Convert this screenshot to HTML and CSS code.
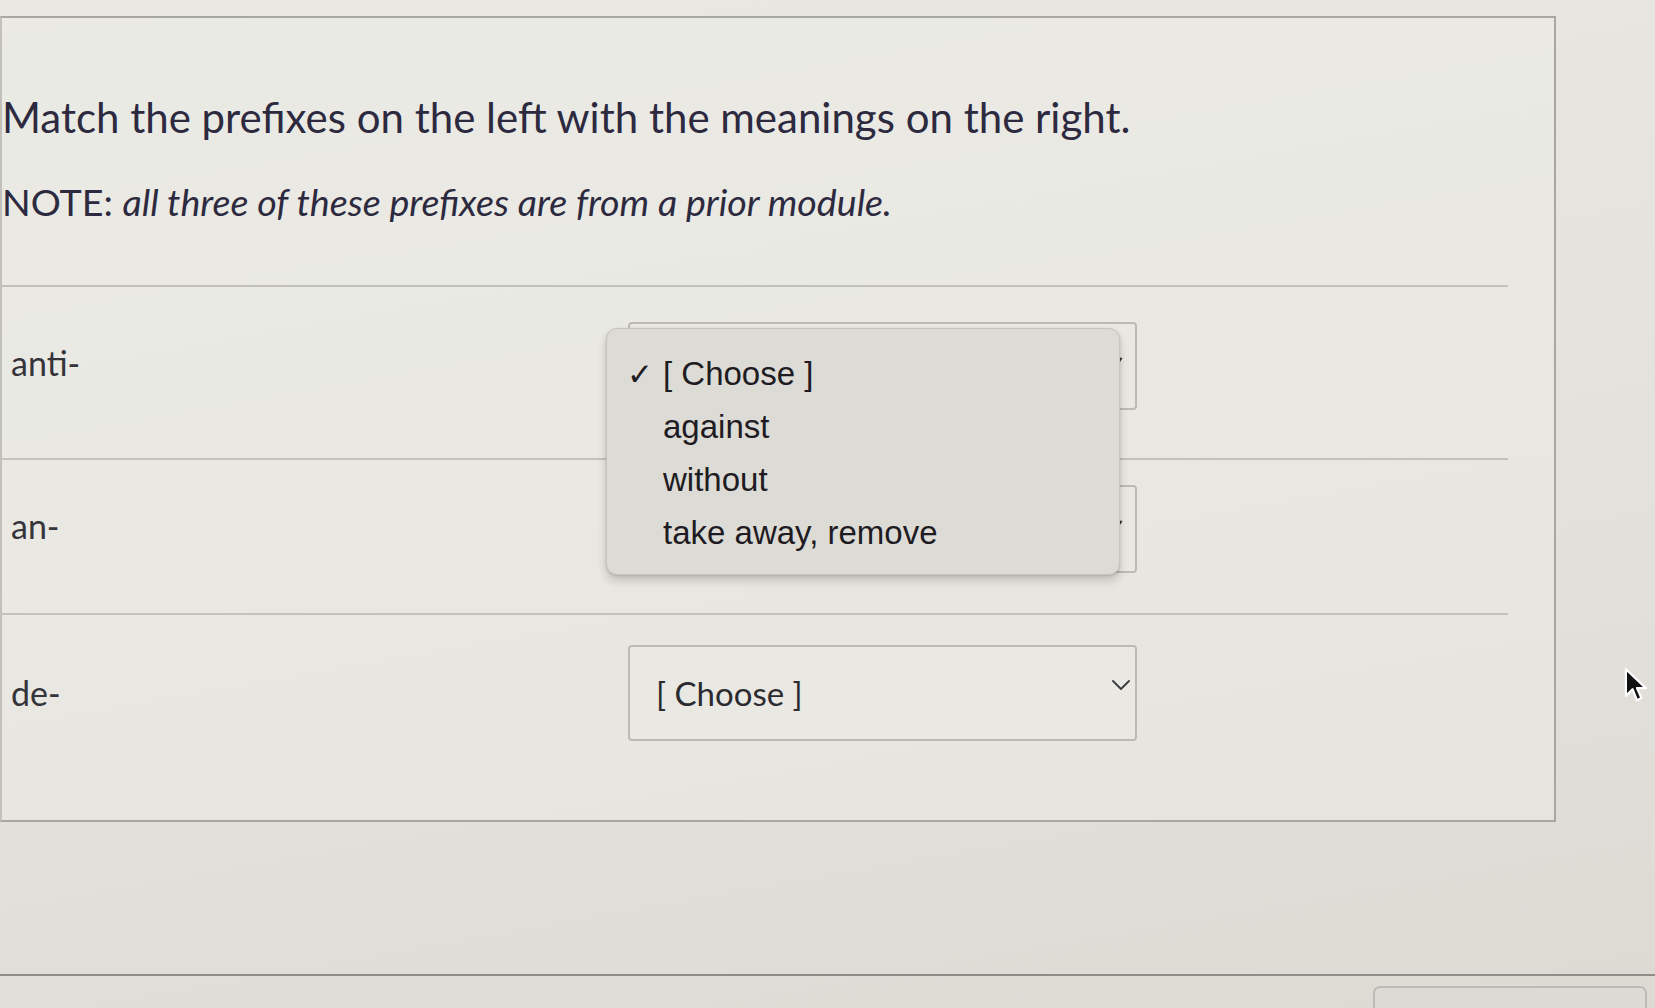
FILE: index.html
```html
<!DOCTYPE html>
<html lang="en">
<head>
<meta charset="utf-8">
<title>Matching question</title>
<link rel="stylesheet" href="styles.css">
</head>
<body>
<div class="screen">
  <div class="card">
    <div class="question">
      <p class="prompt">Match the prefixes on the left with the meanings on the right.</p>
      <p class="note">NOTE: <em>all three of these prefixes are from a prior module.</em></p>
    </div>
    <div class="answers">
      <div class="row row-first">
        <div class="label">anti-</div>
        <div class="select-wrap">
          <div class="select covered"><span class="value">[ Choose ]</span><span class="tick"></span></div>
          <ul class="menu">
            <li class="opt checked"><span class="check">✓</span>[ Choose ]</li>
            <li class="opt"><span class="check"></span>against</li>
            <li class="opt"><span class="check"></span>without</li>
            <li class="opt"><span class="check"></span>take away, remove</li>
          </ul>
        </div>
      </div>
      <div class="row row-second">
        <div class="label">an-</div>
        <div class="select-wrap">
          <div class="select covered"><span class="value">[ Choose ]</span><span class="tick"></span></div>
        </div>
      </div>
      <div class="row row-last">
        <div class="label">de-</div>
        <div class="select-wrap">
          <div class="select"><span class="value">[ Choose ]</span>
            <svg class="chev" width="18" height="10" viewBox="0 0 18 10"><path d="M1 1 L9 9 L17 1" fill="none" stroke="#3a3940" stroke-width="1.8" stroke-linecap="round" stroke-linejoin="round"/></svg>
          </div>
        </div>
      </div>
    </div>
  </div>
  <div class="footer">
    <div class="footer-btn"></div>
  </div>
  <svg class="cursor" width="30" height="40" viewBox="0 0 26 36"><path d="M3 2 L3 26 L9 20 L13 30 L17 28 L13 19 L21 19 Z" fill="#111" stroke="#fff" stroke-width="2" stroke-linejoin="round"/></svg>
</div>
</body>
</html>
```
FILE: styles.css
```css
html, body {
  margin: 0;
  padding: 0;
}
body {
  background: #e2e0da;
  font-family: Lato, "Open Sans", sans-serif;
  color: #2e2c3c;
  width: 1655px;
  height: 1008px;
  overflow: hidden;
}
.screen {
  position: relative;
  width: 1655px;
  height: 1008px;
  padding-top: 16px;
  box-sizing: border-box;
  background: linear-gradient(170deg, #e9e8e3 0%, #e4e2dc 55%, #dcdad3 100%);
}
.card {
  width: 1556px;
  height: 806px;
  box-sizing: border-box;
  border-top: 2px solid #a8a6a0;
  border-right: 2px solid #a8a6a0;
  border-bottom: 2px solid #a8a6a0;
  border-left: 2px solid #c2c0ba;
  background: rgba(238, 237, 232, 0.45);
}
.question {
  margin-right: 46px;
  padding: 72px 0 0 0;
  height: 269px;
  box-sizing: border-box;
  border-bottom: 2px solid #c3c1bb;
}
.prompt {
  margin: 0;
  font-size: 42px;
  line-height: 54px;
  color: #2d2a40;
}
.note {
  margin: 36px 0 0 0;
  font-size: 37.6px;
  line-height: 44px;
  color: #2d2a40;
}
.note em {
  font-style: italic;
}
.answers {
  margin-right: 46px;
}
.row {
  display: grid;
  grid-template-columns: 626px 509px;
  align-items: center;
  border-bottom: 2px solid #c3c1bb;
  padding: 35px 0 48px 0;
}
.row-second {
  padding: 25px 0 40px 0;
}
.row-last {
  border-bottom: none;
  padding: 30px 0 0 0;
}
.label {
  padding-left: 9px;
  font-size: 34px;
  color: #35343a;
  line-height: 42px;
  margin-top: -6px;
}
.row-last .label {
  margin-top: 0;
}
.select-wrap {
  position: relative;
}
.select {
  height: 88px;
  box-sizing: border-box;
  border: 2px solid #bcbab4;
  border-radius: 4px;
  background: #e9e8e3;
  display: flex;
  align-items: center;
  justify-content: space-between;
  padding: 0 5px 0 26px;
}
.covered .value {
  visibility: hidden;
}
.row-last .select {
  height: 96px;
}
.value {
  font-size: 33px;
  color: #2c2b30;
}
.chev {
  margin-top: -16px;
}
.tick {
  width: 2px;
  height: 9px;
  background: #333;
  transform: rotate(35deg);
  margin-right: 10px;
  margin-top: -10px;
}
.menu {
  position: absolute;
  z-index: 5;
  left: -22px;
  top: 6px;
  width: 514px;
  margin: 0;
  padding: 18px 0 0 0;
  height: 247px;
  box-sizing: border-box;
  list-style: none;
  background: #dddbd6;
  border: 1px solid #c6c4be;
  border-radius: 11px;
  box-shadow: 0 6px 10px rgba(0, 0, 0, 0.16), 0 1px 3px rgba(0, 0, 0, 0.12);
  font-family: "Liberation Sans", Arial, sans-serif;
}
.opt {
  display: flex;
  align-items: center;
  height: 53px;
  font-size: 33px;
  color: #1e1c22;
  padding-left: 20px;
}
.check {
  display: inline-block;
  width: 36px;
  font-size: 31px;
  font-weight: bold;
  font-family: "DejaVu Sans", sans-serif;
}
.footer {
  margin-top: 152px;
  border-top: 2px solid #8f8d88;
  display: flex;
  justify-content: flex-end;
  padding: 10px 8px 0 0;
}
.footer-btn {
  width: 270px;
  height: 40px;
  border: 2px solid #bdbbb5;
  border-radius: 7px;
  background: #dcdad4;
}
.cursor {
  position: absolute;
  left: 1622px;
  top: 667px;
}
```
